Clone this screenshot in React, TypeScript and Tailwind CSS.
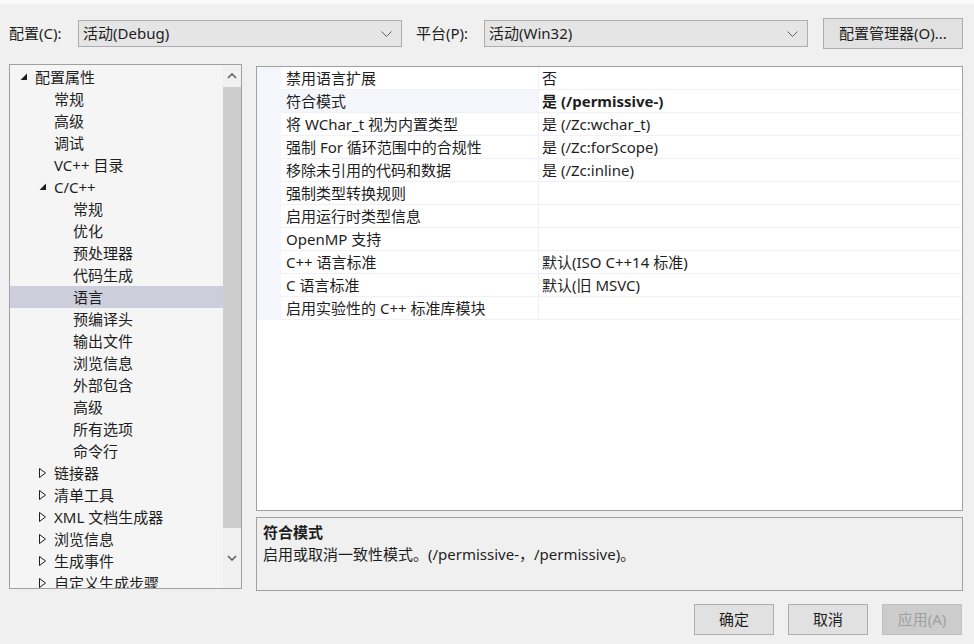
import React from 'react'

type TreeRow = { label: string; level: 0 | 1 | 2; arrow?: 'open' | 'closed'; selected?: boolean }

const tree: TreeRow[] = [
  { label: '配置属性', level: 0, arrow: 'open' },
  { label: '常规', level: 1 },
  { label: '高级', level: 1 },
  { label: '调试', level: 1 },
  { label: 'VC++ 目录', level: 1 },
  { label: 'C/C++', level: 1, arrow: 'open' },
  { label: '常规', level: 2 },
  { label: '优化', level: 2 },
  { label: '预处理器', level: 2 },
  { label: '代码生成', level: 2 },
  { label: '语言', level: 2, selected: true },
  { label: '预编译头', level: 2 },
  { label: '输出文件', level: 2 },
  { label: '浏览信息', level: 2 },
  { label: '外部包含', level: 2 },
  { label: '高级', level: 2 },
  { label: '所有选项', level: 2 },
  { label: '命令行', level: 2 },
  { label: '链接器', level: 1, arrow: 'closed' },
  { label: '清单工具', level: 1, arrow: 'closed' },
  { label: 'XML 文档生成器', level: 1, arrow: 'closed' },
  { label: '浏览信息', level: 1, arrow: 'closed' },
  { label: '生成事件', level: 1, arrow: 'closed' },
  { label: '自定义生成步骤', level: 1, arrow: 'closed' },
]

const props: { name: string; value: string; bold?: boolean; selected?: boolean }[] = [
  { name: '禁用语言扩展', value: '否' },
  { name: '符合模式', value: '是 (/permissive-)', bold: true, selected: true },
  { name: '将 WChar_t 视为内置类型', value: '是 (/Zc:wchar_t)' },
  { name: '强制 For 循环范围中的合规性', value: '是 (/Zc:forScope)' },
  { name: '移除未引用的代码和数据', value: '是 (/Zc:inline)' },
  { name: '强制类型转换规则', value: '' },
  { name: '启用运行时类型信息', value: '' },
  { name: 'OpenMP 支持', value: '' },
  { name: 'C++ 语言标准', value: '默认(ISO C++14 标准)' },
  { name: 'C 语言标准', value: '默认(旧 MSVC)' },
  { name: '启用实验性的 C++ 标准库模块', value: '' },
]

const levelPad = ['pl-[10px]', 'pl-[29px]', 'pl-[48px]']

function Chevron() {
  return (
    <svg width="11" height="6" viewBox="0 0 11 6" className="shrink-0">
      <polyline points="0.5,0.5 5.5,5.5 10.5,0.5" fill="none" stroke="#606060" strokeWidth="1" />
    </svg>
  )
}

function Combo({ text }: { text: string }) {
  return (
    <div className="w-[324px] h-[27px] flex items-center justify-between bg-[#e5e5e5] border border-[#adadad] pl-[4px] pr-[9px]">
      <span>{text}</span>
      <Chevron />
    </div>
  )
}

function Arrow({ kind }: { kind?: 'open' | 'closed' }) {
  if (kind === 'open')
    return (
      <svg width="8" height="8" viewBox="0 0 8 8">
        <polygon points="7,0.5 7,7 0.5,7" fill="#1e1e1e" />
      </svg>
    )
  if (kind === 'closed')
    return (
      <svg width="8" height="10" viewBox="0 0 8 10">
        <polygon points="0.5,0.5 6.5,5 0.5,9.5" fill="none" stroke="#1e1e1e" strokeWidth="1" />
      </svg>
    )
  return null
}

function Button({ label, disabled }: { label: string; disabled?: boolean }) {
  return (
    <div
      className={`w-[80px] h-[31px] flex items-center justify-center border ${
        disabled ? 'bg-[#cccccc] border-[#bfbfbf] text-[#a0a0a0]' : 'bg-[#e1e1e1] border-[#adadad] text-[#1e1e1e]'
      }`}
    >
      {label}
    </div>
  )
}

export default function App() {
  return (
    <div className="w-[974px] h-[644px] bg-[#f0f0f0] text-[#1e1e1e] text-[15px] leading-none font-['Noto_Sans','Noto_Sans_CJK_SC',sans-serif] overflow-hidden">
      <div className="h-[4px] bg-[#fafafa]" />

      {/* 顶部配置栏 */}
      <div className="flex items-center h-[27px] mt-[16px] pl-[9px]">
        <span className="w-[69px]">配置(C):</span>
        <Combo text="活动(Debug)" />
        <span className="ml-[14px] w-[68px]">平台(P):</span>
        <Combo text="活动(Win32)" />
        <div className="ml-[15px] w-[140px] h-[31px] flex items-center justify-center bg-[#e1e1e1] border border-[#adadad]">
          配置管理器(O)...
        </div>
      </div>

      <div className="flex mt-[17px] pl-[9px]">
        {/* 左侧树 */}
        <div className="w-[233px] h-[525px] border border-[#a0a0a0] bg-[#f5f5f5] flex overflow-hidden">
          <div className="flex-1 pt-[1px] overflow-hidden">
            {tree.map((r, i) => (
              <div
                key={i}
                className={`h-[22px] flex items-center whitespace-nowrap ${levelPad[r.level]} ${r.selected ? 'bg-[#cccedb]' : ''}`}
              >
                <div className="w-[15px] flex items-center">
                  <Arrow kind={r.arrow} />
                </div>
                <span>{r.label}</span>
              </div>
            ))}
          </div>
          <div className="w-[18px] flex flex-col bg-[#f0f0f0]">
            <div className="h-[22px] flex items-center justify-center">
              <svg width="10" height="6" viewBox="0 0 10 6">
                <polyline points="1,5 5,1 9,5" fill="none" stroke="#606060" strokeWidth="1.6" />
              </svg>
            </div>
            <div className="h-[441px] bg-[#cdcdcd]" />
            <div className="flex-1 flex items-center justify-center">
              <svg width="10" height="6" viewBox="0 0 10 6">
                <polyline points="1,1 5,5 9,1" fill="none" stroke="#606060" strokeWidth="1.6" />
              </svg>
            </div>
          </div>
        </div>

        {/* 右侧属性网格与说明 */}
        <div className="ml-[14px] mt-[2px] w-[707px] flex flex-col">
          <div className="h-[445px] border border-[#a0a0a0] bg-white">
            {props.map((p, i) => (
              <div key={i} className="h-[23px] flex whitespace-nowrap">
                <div className="w-[24px] bg-[#f4f6fb]" />
                <div className="flex-1 flex border-b border-[#f0f0f6]">
                  <div className={`w-[258px] pl-[5px] flex items-center border-r border-[#f0f0f6] ${p.selected ? 'bg-[#f4f6fb]' : ''}`}>
                    {p.name}
                  </div>
                  <div className={`flex-1 pl-[3px] flex items-center ${p.bold ? 'font-bold' : ''}`}>{p.value}</div>
                </div>
              </div>
            ))}
          </div>

          <div className="mt-[6px] h-[74px] border border-[#a0a0a0] bg-[#f0f0f0] pl-[6px] pt-[6px]">
            <div className="h-[16px] flex items-center font-bold">符合模式</div>
            <div className="mt-[6px] h-[16px] flex items-center">启用或取消一致性模式。(/permissive-，/permissive)。</div>
          </div>
        </div>
      </div>

      {/* 底部按钮 */}
      <div className="flex justify-end gap-[14px] pr-[12px] mt-[13px]">
        <Button label="确定" />
        <Button label="取消" />
        <Button label="应用(A)" disabled />
      </div>
    </div>
  )
}
